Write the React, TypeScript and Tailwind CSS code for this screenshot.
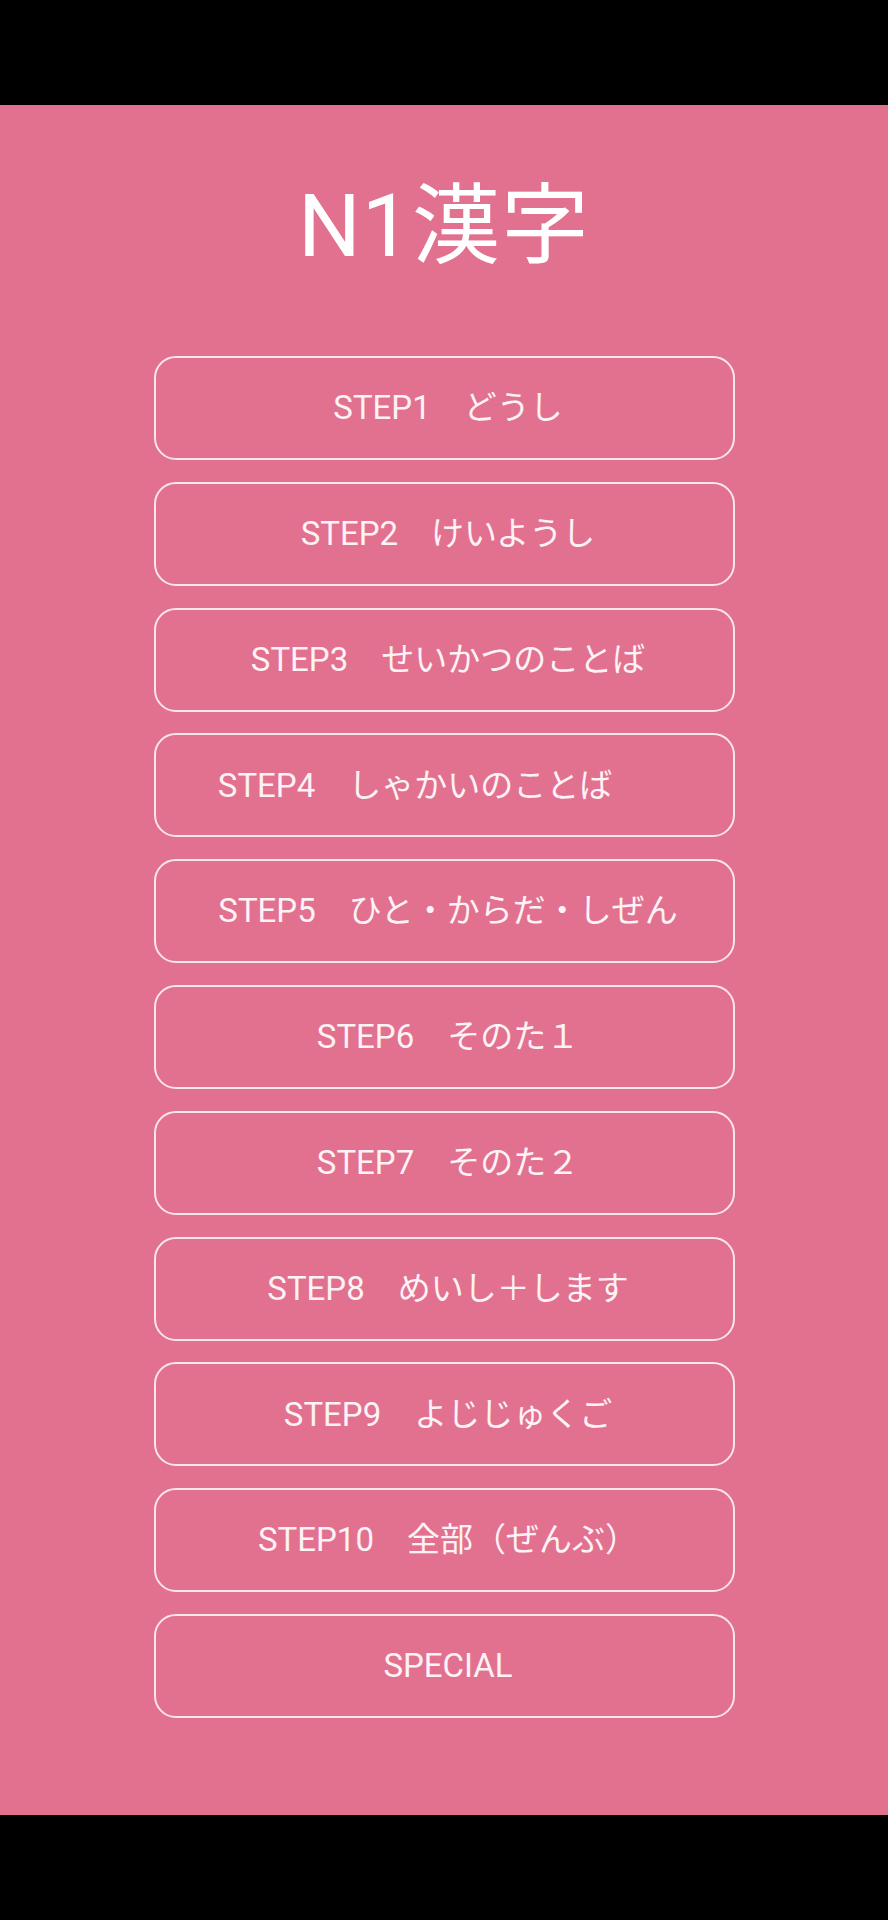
export default function App() {
  const items = [
    "STEP1\u3000どうし",
    "STEP2\u3000けいようし",
    "STEP3\u3000せいかつのことば",
    "STEP4\u3000しゃかいのことば\u3000\u3000",
    "STEP5\u3000ひと・からだ・しぜん",
    "STEP6\u3000そのた１",
    "STEP7\u3000そのた２",
    "STEP8\u3000めいし＋します",
    "STEP9\u3000よじじゅくご",
    "STEP10\u3000全部（ぜんぶ）",
    "SPECIAL",
  ];
  return (
    <div
      className="w-[888px] h-[1920px] bg-black flex flex-col"
      style={{ fontFamily: 'Roboto, "Noto Sans CJK JP", sans-serif' }}
    >
      <div className="h-[105px] bg-black shrink-0" />
      <div className="h-[1710px] bg-[#e2718f] flex flex-col items-center shrink-0">
        <h1 className="mt-[77px] h-[88px] text-[88px] leading-[88px] font-normal text-white tracking-[1px]">
          N1漢字
        </h1>
        <div className="mt-[86px] flex flex-col gap-[21.8px]">
          {items.map((t) => (
            <button
              key={t}
              className="w-[581px] h-[104px] rounded-[22px] border-2 border-[#fbe6ec] flex items-center justify-center pl-[8px] text-[33px] text-[#fdf2f5] whitespace-pre"
            >
              {t}
            </button>
          ))}
        </div>
      </div>
      <div className="flex-1 bg-black" />
    </div>
  );
}
